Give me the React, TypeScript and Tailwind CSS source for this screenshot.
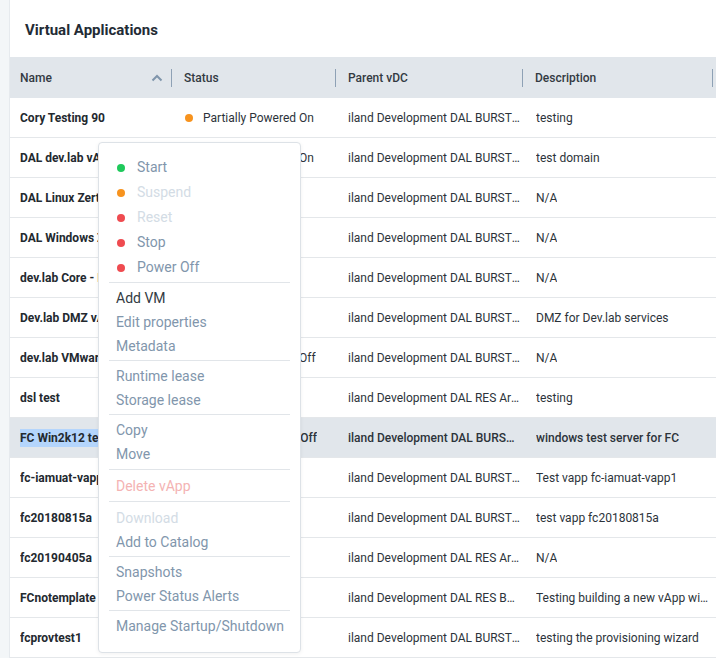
import React from "react";

type Row = {
  name: string;
  status: string;
  dot: string;
  vdc: string;
  description: string;
  selected?: boolean;
};

const rows: Row[] = [
  { name: "Cory Testing 90", status: "Partially Powered On", dot: "bg-[#f7931e]", vdc: "iland Development DAL BURST Arch", description: "testing" },
  { name: "DAL dev.lab vApp", status: "Partially Powered On", dot: "bg-[#f7931e]", vdc: "iland Development DAL BURST Arch", description: "test domain" },
  { name: "DAL Linux Zerto", status: "Powered On", dot: "bg-[#22c55e]", vdc: "iland Development DAL BURST Arch", description: "N/A" },
  { name: "DAL Windows Zerto", status: "Powered On", dot: "bg-[#22c55e]", vdc: "iland Development DAL BURST Arch", description: "N/A" },
  { name: "dev.lab Core - DAL", status: "Powered On", dot: "bg-[#22c55e]", vdc: "iland Development DAL BURST Arch", description: "N/A" },
  { name: "Dev.lab DMZ vApp", status: "Powered On", dot: "bg-[#22c55e]", vdc: "iland Development DAL BURST Arch", description: "DMZ for Dev.lab services" },
  { name: "dev.lab VMware", status: "Partially Powered Off", dot: "bg-[#f7931e]", vdc: "iland Development DAL BURST Arch", description: "N/A" },
  { name: "dsl test", status: "Powered Off", dot: "bg-[#ef4444]", vdc: "iland Development DAL RES Arch", description: "testing" },
  { name: "FC Win2k12 test", status: "Partially Powered Off", dot: "bg-[#f7931e]", vdc: "iland Development DAL BURST Arch", description: "windows test server for FC", selected: true },
  { name: "fc-iamuat-vapp1", status: "Powered Off", dot: "bg-[#ef4444]", vdc: "iland Development DAL BURST Arch", description: "Test vapp fc-iamuat-vapp1" },
  { name: "fc20180815a", status: "Powered Off", dot: "bg-[#ef4444]", vdc: "iland Development DAL BURST Arch", description: "test vapp fc20180815a" },
  { name: "fc20190405a", status: "Powered Off", dot: "bg-[#ef4444]", vdc: "iland Development DAL RES Arch", description: "N/A" },
  { name: "FCnotemplate", status: "Powered Off", dot: "bg-[#ef4444]", vdc: "iland Development DAL RES Backup", description: "Testing building a new vApp with no template" },
  { name: "fcprovtest1", status: "Powered Off", dot: "bg-[#ef4444]", vdc: "iland Development DAL BURST Arch", description: "testing the provisioning wizard" },
];

const cols = "grid grid-cols-[162px_164px_187px_190px_1fr]";

function SortUp() {
  return (
    <svg width="12" height="8" viewBox="0 0 12 8" className="mr-[8px]">
      <path d="M1.5 6.5 6 2l4.5 4.5" fill="none" stroke="#7f95ab" strokeWidth="2" />
    </svg>
  );
}

function HeaderCell({ label, first, sort }: { label: string; first?: boolean; sort?: boolean }) {
  return (
    <div className={`flex items-center h-full ${first ? "pl-[10px]" : "pl-3"}`}>
      <span className="flex-1 truncate">{label}</span>
      {sort && <SortUp />}
      <span className="w-px h-[18px] bg-[#8ea1b5]" />
    </div>
  );
}

type Item = { label: string; tone: "active" | "muted" | "disabled" | "danger"; dot?: string };

const groups: Item[][] = [
  [
    { label: "Start", tone: "muted", dot: "bg-[#1fc95b]" },
    { label: "Suspend", tone: "disabled", dot: "bg-[#f7931e]" },
    { label: "Reset", tone: "disabled", dot: "bg-[#ef4b50]" },
    { label: "Stop", tone: "muted", dot: "bg-[#ef4b50]" },
    { label: "Power Off", tone: "muted", dot: "bg-[#ef4b50]" },
  ],
  [
    { label: "Add VM", tone: "active" },
    { label: "Edit properties", tone: "muted" },
    { label: "Metadata", tone: "muted" },
  ],
  [
    { label: "Runtime lease", tone: "muted" },
    { label: "Storage lease", tone: "muted" },
  ],
  [
    { label: "Copy", tone: "muted" },
    { label: "Move", tone: "muted" },
  ],
  [{ label: "Delete vApp", tone: "danger" }],
  [
    { label: "Download", tone: "disabled" },
    { label: "Add to Catalog", tone: "muted" },
  ],
  [
    { label: "Snapshots", tone: "muted" },
    { label: "Power Status Alerts", tone: "muted" },
  ],
  [{ label: "Manage Startup/Shutdown", tone: "muted" }],
];

const toneClass = {
  active: "text-[#333a42]",
  muted: "text-[#8196ac]",
  disabled: "text-[#d3dce5]",
  danger: "text-[#f4b3b3]",
};

function ActionMenu() {
  return (
    <div className="absolute left-[88px] top-[142px] w-[203px] bg-white border border-[#dde2e7] rounded-[4px] shadow-[0_1px_4px_rgba(0,0,0,0.06)] pt-[12px] pb-[14px] text-[14px]">
      {groups.map((group, gi) => (
        <div key={gi}>
          {gi > 0 && (
            <div className={`mx-[10px] ${gi === 4 || gi === 5 ? "mt-[3px] mb-[4px]" : "mt-[2px] mb-[3px]"} h-px bg-[#e1e5e9]`} />
          )}
          {group.map((item) =>
            item.dot ? (
              <div key={item.label} className={`flex items-center h-[25px] pl-[18px] ${toneClass[item.tone]}`}>
                <span className={`w-[8px] h-[8px] rounded-full ${item.dot}`} />
                <span className="ml-[12px]">{item.label}</span>
              </div>
            ) : (
              <div key={item.label} className={`flex items-center h-[24px] pl-[17px] ${toneClass[item.tone]}`}>
                {item.label}
              </div>
            )
          )}
        </div>
      ))}
    </div>
  );
}

export default function App() {
  return (
    <div className="w-[716px] h-[658px] overflow-hidden flex bg-[#f3f6f8] font-['Roboto',sans-serif] text-[#2c333a]">
      <div className="w-[10px] shrink-0 border-r border-[#e6eaee]" />
      <div className="relative flex-1 bg-white">
        {/* Title */}
        <div className="h-[57px] flex items-center pl-[15px] pt-[3px] text-[15px] font-bold text-[#232b35]">
          Virtual Applications
        </div>

        {/* Table header */}
        <div className={`${cols} h-[41px] bg-[#e1e6eb] text-[12px] font-medium text-[#333a42]`}>
          <HeaderCell label="Name" first sort />
          <HeaderCell label="Status" />
          <HeaderCell label="Parent vDC" />
          <HeaderCell label="Description" />
          <div />
        </div>

        {/* Rows */}
        {rows.map((r) => (
          <div
            key={r.name}
            className={`${cols} h-[40px] border-b border-[#e4e7ea] text-[12px] ${r.selected ? "bg-[#e1e6eb] font-medium" : ""}`}
          >
            <div className="flex items-center pl-[10px] pr-2 min-w-0">
              <span className={`truncate font-bold text-[#23292f] ${r.selected ? "bg-[#b4d5fc]" : ""}`}>{r.name}</span>
            </div>
            <div className="flex items-center pl-[13px] min-w-0">
              <span className={`w-[8px] h-[8px] rounded-full shrink-0 ${r.dot}`} />
              <span className="ml-[10px] truncate">{r.status}</span>
            </div>
            <div className="flex items-center pl-[12px] pr-[2px] min-w-0">
              <span className="truncate">{r.vdc}</span>
            </div>
            <div className="flex items-center pl-[13px] pr-[4px] min-w-0">
              <span className="truncate">{r.description}</span>
            </div>
            <div />
          </div>
        ))}

        <ActionMenu />
      </div>
    </div>
  );
}
